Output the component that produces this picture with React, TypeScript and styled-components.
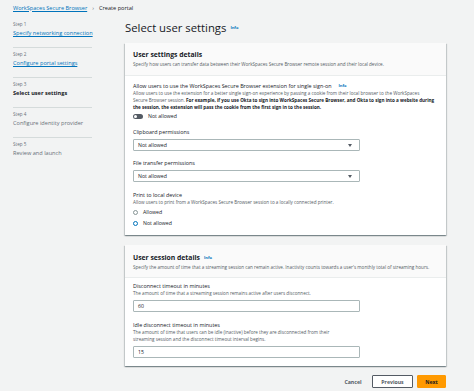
import React from 'react'
import styled, { createGlobalStyle } from 'styled-components'

const GlobalStyle = createGlobalStyle`
  html, body {
    margin: 0;
    padding: 0;
    background: #f2f3f3;
    font-family: "Open Sans", "Liberation Sans", sans-serif;
    color: #16191f;
  }
`

const Page = styled.div`
  width: 474px;
  height: 391px;
  background: #f2f3f3;
  display: flex;
  flex-direction: column;
  overflow: hidden;
`

const Breadcrumbs = styled.div`
  display: flex;
  align-items: center;
  gap: 5px;
  height: 15px;
  padding: 0 13px;
  font-size: 5.6px;
`

const Crumb = styled.a`
  color: #0073bb;
  text-decoration: underline;
`

const Chevron = styled.span`
  color: #687078;
  font-size: 6px;
`

const Body = styled.div`
  display: flex;
  flex: 1;
`

const Sidebar = styled.nav`
  width: 125px;
  flex-shrink: 0;
  padding: 3px 0 0 13px;
  box-sizing: border-box;
`

const Step = styled.div<{ last?: boolean }>`
  width: 79px;
  height: 30px;
  box-sizing: border-box;
  padding-top: 2px;
  border-bottom: ${(p) => (p.last ? 'none' : '1px solid #d5dbdb')};
`

const StepNo = styled.div`
  font-size: 4.6px;
  color: #687078;
  line-height: 8px;
`

const StepName = styled.div<{ state: 'done' | 'current' | 'todo' }>`
  font-size: 5.6px;
  line-height: 10px;
  white-space: nowrap;
  color: ${(p) => (p.state === 'done' ? '#0073bb' : p.state === 'current' ? '#16191f' : '#687078')};
  font-weight: ${(p) => (p.state === 'current' ? 700 : 400)};
  text-decoration: ${(p) => (p.state === 'done' ? 'underline' : 'none')};
`

const Main = styled.main`
  flex: 1;
  display: flex;
  flex-direction: column;
  padding-right: 28px;
`

const Title = styled.h1`
  margin: 0;
  height: 28px;
  padding-bottom: 4px;
  box-sizing: border-box;
  display: flex;
  align-items: center;
  gap: 4px;
  font-size: 11.3px;
  font-weight: 400;
`

const Info = styled.span`
  color: #0073bb;
  font-size: 4px;
  font-weight: 700;
`

const Card = styled.section`
  background: #fff;
  box-shadow: 0 1px 1px 0 rgba(0, 28, 36, 0.3), 1px 1px 1px 0 rgba(0, 28, 36, 0.15),
    -1px 1px 1px 0 rgba(0, 28, 36, 0.15);
  margin-bottom: 9px;
  & + & {
    margin-top: 1px;
  }
`

const CardHeader = styled.header<{ top: number }>`
  height: 33px;
  background: #fafafa;
  border-bottom: 1px solid #eaeded;
  padding: ${(p) => p.top}px 8px 0;
  box-sizing: border-box;
`

const CardTitle = styled.h2`
  margin: 0;
  display: flex;
  align-items: center;
  gap: 4px;
  font-size: 6.8px;
  font-weight: 700;
  line-height: 11px;
`

const CardDesc = styled.p`
  margin: 0;
  font-size: 4.6px;
  line-height: 9px;
  color: #545b64;
  white-space: nowrap;
`

const CardBody = styled.div<{ top: number; bottom: number }>`
  padding: ${(p) => p.top}px 8px ${(p) => p.bottom}px;
`

const Field = styled.div<{ gap?: number }>`
  margin-bottom: ${(p) => p.gap ?? 0}px;
`

const Label = styled.div`
  display: flex;
  align-items: center;
  gap: 7px;
  font-size: 5.4px;
  line-height: 8px;
`

const Hint = styled.div<{ below?: number }>`
  font-size: 4.6px;
  line-height: 7px;
  color: #545b64;
  white-space: nowrap;
  margin-bottom: ${(p) => p.below ?? 0}px;
  b {
    color: #16191f;
    font-weight: 700;
  }
`

const ToggleRow = styled.div`
  display: flex;
  align-items: center;
  gap: 5px;
  margin-top: 1px;
  font-size: 5.2px;
  line-height: 8px;
`

const Toggle = styled.span`
  width: 10px;
  height: 5px;
  border-radius: 3px;
  background: #545b64;
  position: relative;
  &::after {
    content: '';
    position: absolute;
    left: 1px;
    top: 1px;
    width: 3px;
    height: 3px;
    border-radius: 50%;
    background: #fff;
  }
`

const Box = styled.div`
  width: 227px;
  height: 12px;
  margin-top: 3px;
  box-sizing: border-box;
  border: 1px solid #aab7b8;
  border-radius: 1px;
  background: #fff;
  display: flex;
  align-items: center;
  justify-content: space-between;
  padding: 0 7px 0 4px;
  font-size: 5.2px;
`

const Caret = styled.span`
  width: 0;
  height: 0;
  border-left: 2px solid transparent;
  border-right: 2px solid transparent;
  border-top: 3px solid #545b64;
`

const RadioRow = styled.div`
  display: flex;
  align-items: center;
  gap: 5px;
  font-size: 5.2px;
  line-height: 10px;
  & + & {
    margin-top: 1px;
  }
`

const Radio = styled.span<{ checked?: boolean }>`
  width: 5px;
  height: 5px;
  box-sizing: border-box;
  border-radius: 50%;
  border: ${(p) => (p.checked ? '1.6px solid #0073bb' : '0.7px solid #879596')};
  background: #fff;
`

const Actions = styled.div`
  display: flex;
  justify-content: flex-end;
  align-items: center;
  gap: 4px;
`

const Button = styled.button<{ variant: 'link' | 'normal' | 'primary' }>`
  font-family: inherit;
  font-size: 5.2px;
  font-weight: 700;
  height: 13px;
  box-sizing: border-box;
  width: ${(p) => (p.variant === 'link' ? 30 : p.variant === 'primary' ? 29 : 41)}px;
  padding: 0;
  border-radius: 1px;
  cursor: pointer;
  color: ${(p) => (p.variant === 'primary' ? '#16191f' : '#545b64')};
  background: ${(p) => (p.variant === 'primary' ? '#ff9900' : p.variant === 'normal' ? '#fff' : 'transparent')};
  border: 1px solid ${(p) => (p.variant === 'primary' ? '#ff9900' : p.variant === 'normal' ? '#545b64' : 'transparent')};
`

const steps = [
  { n: 1, name: 'Specify networking connection', state: 'done' as const },
  { n: 2, name: 'Configure portal settings', state: 'done' as const },
  { n: 3, name: 'Select user settings', state: 'current' as const },
  { n: 4, name: 'Configure identity provider', state: 'todo' as const },
  { n: 5, name: 'Review and launch', state: 'todo' as const },
]

export default function App() {
  return (
    <Page>
      <GlobalStyle />
      <Breadcrumbs>
        <Crumb>WorkSpaces Secure Browser</Crumb>
        <Chevron>›</Chevron>
        <span>Create portal</span>
      </Breadcrumbs>
      <Body>
        <Sidebar>
          {steps.map((s, i) => (
            <Step key={s.n} last={i === steps.length - 1}>
              <StepNo>Step {s.n}</StepNo>
              <StepName state={s.state}>{s.name}</StepName>
            </Step>
          ))}
        </Sidebar>
        <Main>
          <Title>
            Select user settings <Info>Info</Info>
          </Title>
          <Card>
            <CardHeader top={6}>
              <CardTitle>User settings details</CardTitle>
              <CardDesc>
                Specify how users can transfer data between their WorkSpaces Secure Browser remote session and their local device.
              </CardDesc>
            </CardHeader>
            <CardBody top={6} bottom={7}>
              <Field gap={8}>
                <Label>
                  Allow users to use the WorkSpaces Secure Browser extension for single sign-on <Info>Info</Info>
                </Label>
                <Hint>
                  Allow users to use the extension for a better single sign-on experience by passing a cookie from their local
                  browser to the WorkSpaces
                  <br />
                  Secure Browser session.{' '}
                  <b>For example, if you use Okta to sign into WorkSpaces Secure Browser, and Okta to sign into a website during</b>
                  <br />
                  <b>the session, the extension will pass the cookie from the first sign in to the session.</b>
                </Hint>
                <ToggleRow>
                  <Toggle />
                  Not allowed
                </ToggleRow>
              </Field>
              <Field gap={8}>
                <Label>Clipboard permissions</Label>
                <Box>
                  Not allowed <Caret />
                </Box>
              </Field>
              <Field gap={9}>
                <Label>File transfer permissions</Label>
                <Box>
                  Not allowed <Caret />
                </Box>
              </Field>
              <Field>
                <Label>Print to local device</Label>
                <Hint below={1}>Allow users to print from a WorkSpaces Secure Browser session to a locally connected printer.</Hint>
                <RadioRow>
                  <Radio /> Allowed
                </RadioRow>
                <RadioRow>
                  <Radio checked /> Not allowed
                </RadioRow>
              </Field>
            </CardBody>
          </Card>
          <Card>
            <CardHeader top={7}>
              <CardTitle>
                User session details <Info>Info</Info>
              </CardTitle>
              <CardDesc>
                Specify the amount of time that a streaming session can remain active. Inactivity counts towards a user's monthly
                total of streaming hours.
              </CardDesc>
            </CardHeader>
            <CardBody top={4} bottom={8}>
              <Field gap={9}>
                <Label>Disconnect timeout in minutes</Label>
                <Hint>The amount of time that a streaming session remains active after users disconnect.</Hint>
                <Box>60</Box>
              </Field>
              <Field>
                <Label>Idle disconnect timeout in minutes</Label>
                <Hint>
                  The amount of time that users can be idle (inactive) before they are disconnected from their
                  <br />
                  streaming session and the disconnect timeout interval begins.
                </Hint>
                <Box>15</Box>
              </Field>
            </CardBody>
          </Card>
          <Actions>
            <Button variant="link">Cancel</Button>
            <Button variant="normal">Previous</Button>
            <Button variant="primary">Next</Button>
          </Actions>
        </Main>
      </Body>
    </Page>
  )
}
